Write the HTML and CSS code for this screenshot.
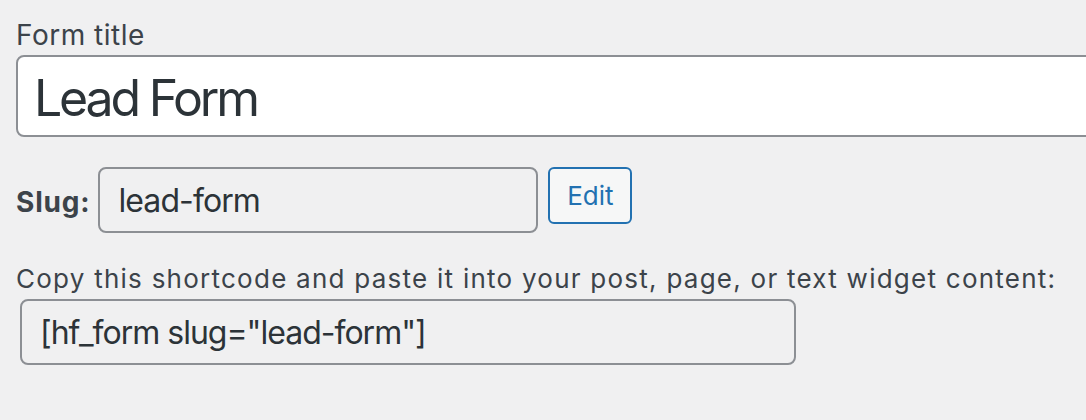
FILE: index.html
```html
<!DOCTYPE html>
<html lang="en">
<head>
<meta charset="utf-8">
<title>Form title</title>
<link rel="stylesheet" href="styles.css">
</head>
<body>
<div class="page">
  <label class="field-label" for="title">Form title</label>
  <input class="title-input" id="title" type="text" value="Lead Form">

  <div class="slug-row">
    <label class="slug-label" for="slug">Slug:</label>
    <input class="slug-input" id="slug" type="text" value="lead-form" readonly>
    <button class="edit-btn" type="button">Edit</button>
  </div>

  <p class="help">Copy this shortcode and paste it into your post, page, or text widget content:</p>
  <input class="code-input" type="text" value='[hf_form slug="lead-form"]' readonly>
</div>
</body>
</html>
```

FILE: styles.css
```css
html, body {
  margin: 0;
  padding: 0;
  background: #f0f0f1;
  overflow: hidden;
}

body {
  font-family: Inter, "Liberation Sans", Arial, sans-serif;
  color: #3c434a;
}

.page {
  display: flex;
  flex-direction: column;
  align-items: flex-start;
  padding: 18px 0 0 16px;
}

.field-label {
  display: block;
  font-size: 28px;
  line-height: 34px;
  letter-spacing: 0.5px;
  color: #3c434a;
}

input {
  font-family: inherit;
  box-sizing: border-box;
  margin: 0;
  border: 2px solid #8c8f94;
  color: #2c3338;
  outline: none;
}

.title-input {
  margin-top: 3px;
  width: 1090px;
  height: 82px;
  padding: 3px 16px 0;
  border-radius: 8px;
  background: #fff;
  font-size: 50px;
  letter-spacing: -3.2px;
}

.slug-row {
  display: flex;
  align-items: flex-start;
  margin-top: 30px;
}

.slug-label {
  font-size: 28px;
  line-height: 34px;
  font-weight: 700;
  letter-spacing: 0.8px;
  margin-top: 18px;
  margin-right: 8px;
  color: #3c434a;
}

.slug-input {
  width: 440px;
  height: 66px;
  padding: 1px 18px 0;
  border-radius: 8px;
  background: #f0f0f1;
  font-size: 32px;
  letter-spacing: -0.9px;
}

.edit-btn {
  box-sizing: border-box;
  margin-left: 10px;
  width: 84px;
  height: 57px;
  padding: 0;
  border: 2px solid #2271b1;
  border-radius: 6px;
  background: #f6f7f7;
  color: #2271b1;
  font-family: inherit;
  font-size: 26px;
}

.help {
  margin: 30px 0 0;
  font-size: 26px;
  line-height: 32px;
  letter-spacing: 1.25px;
  color: #3c434a;
}

.code-input {
  margin: 4px 0 0 4px;
  width: 776px;
  height: 66px;
  padding: 1px 18px 0;
  border-radius: 8px;
  background: #f0f0f1;
  font-size: 32px;
  letter-spacing: -1px;
}
```
